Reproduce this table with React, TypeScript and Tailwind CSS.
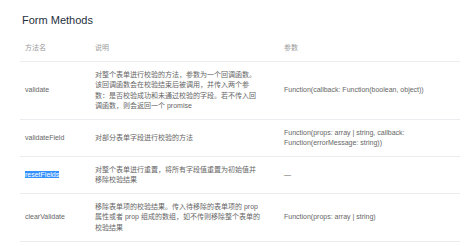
import React from "react";

const font = { fontFamily: '"Liberation Sans", "Noto Sans CJK SC", sans-serif' };

type Row = { name: React.ReactNode; desc: string[]; param: string[] };

const rows: Row[] = [
  {
    name: "validate",
    desc: [
      "对整个表单进行校验的方法，参数为一个回调函数。",
      "该回调函数会在校验结束后被调用，并传入两个参",
      "数：是否校验成功和未通过校验的字段。若不传入回",
      "调函数，则会返回一个 promise",
    ],
    param: ["Function(callback: Function(boolean, object))"],
  },
  {
    name: "validateField",
    desc: ["对部分表单字段进行校验的方法"],
    param: ["Function(props: array | string, callback:", "Function(errorMessage: string))"],
  },
  {
    name: <span className="bg-[#3390ff] text-white">resetFields</span>,
    desc: ["对整个表单进行重置，将所有字段值重置为初始值并", "移除校验结果"],
    param: ["—"],
  },
  {
    name: "clearValidate",
    desc: [
      "移除表单项的校验结果。传入待移除的表单项的 prop",
      "属性或者 prop 组成的数组，如不传则移除整个表单的",
      "校验结果",
    ],
    param: ["Function(props: array | string)"],
  },
];

export default function App() {
  return (
    <div className="w-[474px] h-[246px] bg-white overflow-hidden pt-[12px] pl-[20px]" style={font}>
      <h3 className="text-[11px] leading-[16.5px] text-[#1f2f3d] font-normal ml-[2px] mb-[7px]">Form Methods</h3>
      <table className="w-[440px] table-fixed border-collapse text-[7px] leading-[10.5px]">
        <colgroup>
          <col className="w-[70px]" />
          <col className="w-[189px]" />
          <col className="w-[181px]" />
        </colgroup>
        <thead>
          <tr className="border-b border-[#ebedf0]">
            <th className="text-left font-normal text-[#999] px-[5px] py-[7.5px]">方法名</th>
            <th className="text-left font-normal text-[#999] px-[5px] py-[7.5px]">说明</th>
            <th className="text-left font-normal text-[#999] px-[5px] py-[7.5px]">参数</th>
          </tr>
        </thead>
        <tbody>
          {rows.map((r, i) => (
            <tr key={i} className="border-b border-[#ebedf0]">
              <td className="align-middle text-[#666] px-[5px] py-[7.5px] whitespace-nowrap">{r.name}</td>
              <td className="align-middle text-[#666] px-[5px] py-[7.5px] whitespace-nowrap">
                {r.desc.map((l, j) => (
                  <div key={j}>{l}</div>
                ))}
              </td>
              <td className="align-middle text-[#666] px-[5px] py-[7.5px] whitespace-nowrap">
                {r.param.map((l, j) => (
                  <div key={j}>{l}</div>
                ))}
              </td>
            </tr>
          ))}
        </tbody>
      </table>
    </div>
  );
}
